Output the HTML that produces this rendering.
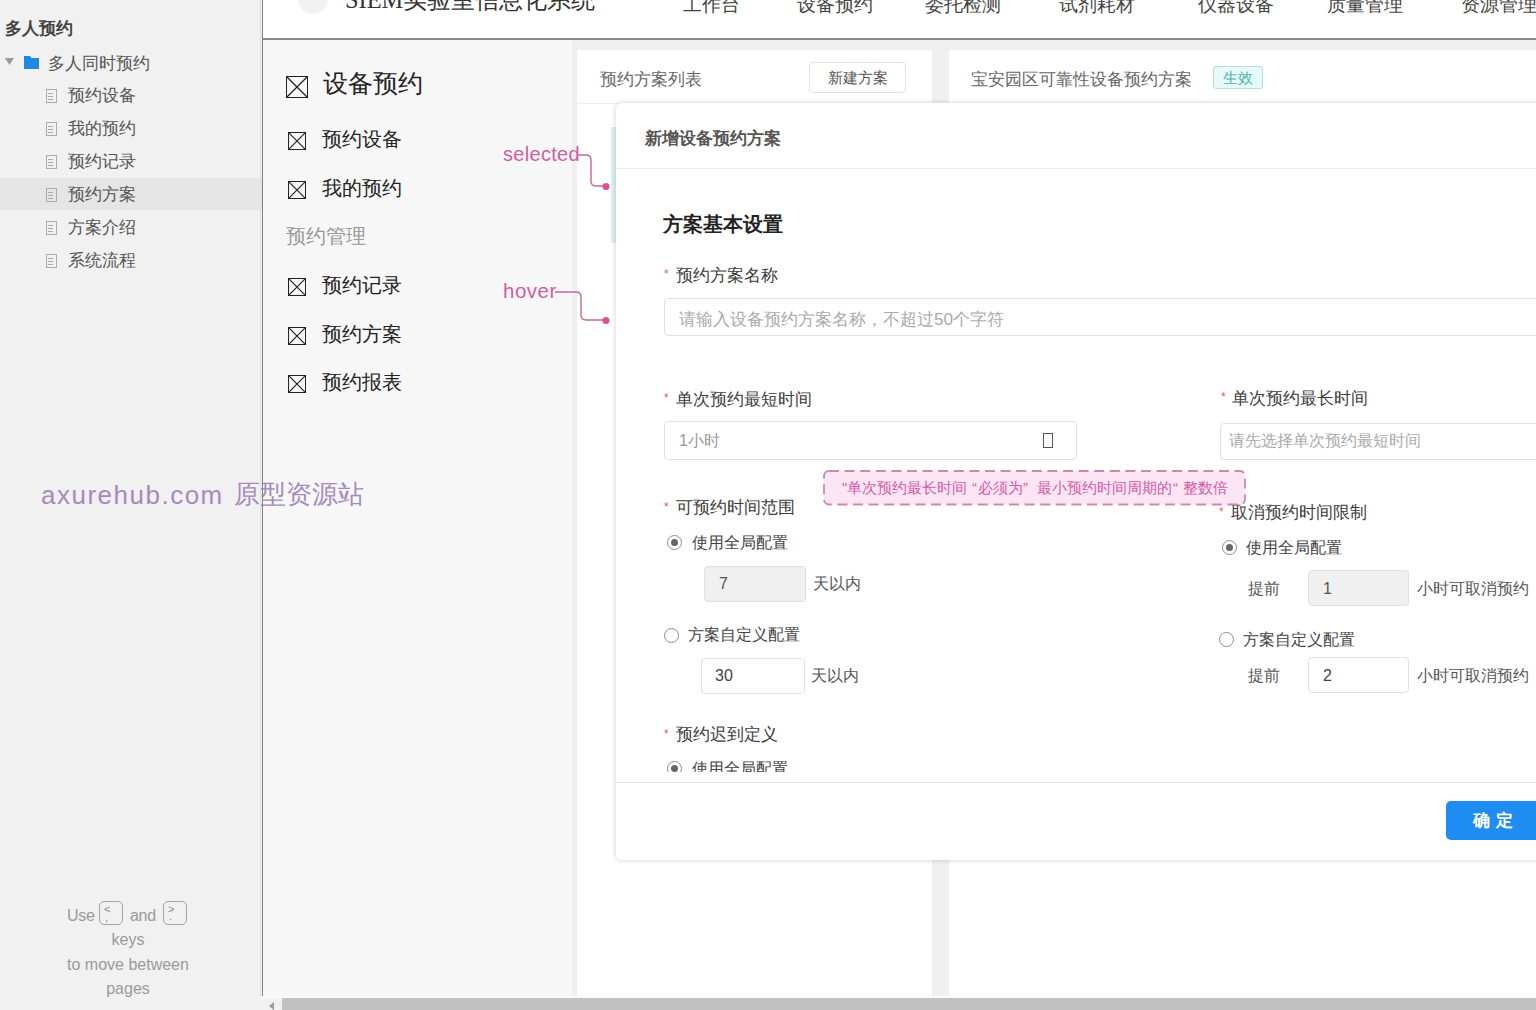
<!DOCTYPE html>
<html><head><meta charset="utf-8">
<style>
*{margin:0;padding:0;box-sizing:border-box}
html,body{width:1536px;height:1010px;overflow:hidden;background:#fff;font-family:"Liberation Sans",sans-serif;color:#333}
.a{position:absolute;white-space:nowrap}
#side{position:absolute;left:0;top:0;width:262px;height:1010px;background:#f1f1f1}
#sideline{position:absolute;left:262px;top:0;width:1px;height:996px;background:#808080}
.tr{font-size:17.3px;line-height:20px;color:#555}
.pg{position:absolute;width:11px;height:14px;border:1.7px solid #ababab;background:transparent}
.pg i{position:absolute;left:1.2px;width:5.2px;height:1.4px;background:#ababab}
.xi{position:absolute;border:1.6px solid #222}
.xi svg{position:absolute;left:0;top:0;width:100%;height:100%}
.lp{font-size:20px;line-height:24px;color:#222}
.nav{font-size:18.6px;line-height:22px;color:#444}
.key{position:absolute;width:24px;height:24px;border:1.6px solid #a4a4a4;border-radius:5px}
.key span{position:absolute;font-size:11px;line-height:12px;color:#888}
.pk{top:478.5px;font-size:15px;line-height:18px;color:#d55aa8}
.pink{color:#cf5ea0}
.lbl{font-size:17px;line-height:20px;color:#3c3c3c}
.ast{color:#e06060;font-size:12px;line-height:12px}
.inp{position:absolute;border:1px solid #e0e0e0;border-radius:4px;background:#fff}
.ph{font-size:16px;line-height:20px;color:#aaa}
.radio{position:absolute;width:15px;height:15px;border:1px solid #8c8c8c;border-radius:50%;background:#fff}
.radio.on::after{content:"";position:absolute;left:3px;top:3px;width:7px;height:7px;border-radius:50%;background:#666}
</style></head><body>

<!-- SIDEBAR -->
<div id="side"></div>
<div class="a" style="left:5px;top:18px;font-size:17.3px;line-height:20px;font-weight:bold;color:#444">多人预约</div>
<svg class="a" style="left:5px;top:58px" width="10" height="8"><path d="M0 0H9L4.5 7Z" fill="#9a9a9a"/></svg>
<svg class="a" style="left:24px;top:56px" width="15" height="13"><path d="M0 0H6L7.5 2H15V13H0Z" fill="#1e88e5"/></svg>
<div class="a tr" style="left:48px;top:53px">多人同时预约</div>

<div class="a" style="left:0;top:178px;width:262px;height:32px;background:#e5e5e5"></div>
<div class="pg" style="left:46px;top:89px"><i style="top:3px"></i><i style="top:6px"></i><i style="top:9px"></i></div>
<div class="a tr" style="left:68px;top:85px">预约设备</div>
<div class="pg" style="left:46px;top:122px"><i style="top:3px"></i><i style="top:6px"></i><i style="top:9px"></i></div>
<div class="a tr" style="left:68px;top:118px">我的预约</div>
<div class="pg" style="left:46px;top:155px"><i style="top:3px"></i><i style="top:6px"></i><i style="top:9px"></i></div>
<div class="a tr" style="left:68px;top:151px">预约记录</div>
<div class="pg" style="left:46px;top:188px"><i style="top:3px"></i><i style="top:6px"></i><i style="top:9px"></i></div>
<div class="a tr" style="left:68px;top:184px">预约方案</div>
<div class="pg" style="left:46px;top:221px"><i style="top:3px"></i><i style="top:6px"></i><i style="top:9px"></i></div>
<div class="a tr" style="left:68px;top:217px">方案介绍</div>
<div class="pg" style="left:46px;top:254px"><i style="top:3px"></i><i style="top:6px"></i><i style="top:9px"></i></div>
<div class="a tr" style="left:68px;top:250px">系统流程</div>

<!-- footer hint -->
<div class="a" style="left:67px;top:904px;font-size:16px;line-height:24px;color:#9a9a9a;letter-spacing:-0.3px">Use</div>
<div class="key" style="left:99px;top:901px"><span style="left:4px;top:1px">&lt;</span><span style="left:5px;top:9px">,</span></div>
<div class="a" style="left:130px;top:904px;font-size:16px;line-height:24px;color:#9a9a9a;letter-spacing:-0.3px">and</div>
<div class="key" style="left:163px;top:901px"><span style="left:4px;top:1px">&gt;</span><span style="left:5px;top:8px">.</span></div>
<div class="a" style="left:0;top:928px;width:256px;text-align:center;font-size:16px;line-height:24.5px;color:#9a9a9a">keys<br>to move between<br>pages</div>



<!-- HEADER -->
<div class="a" style="left:263px;top:0;width:1273px;height:38px;background:#fff"></div>


<!-- left panel -->
<div class="a" style="left:263px;top:39px;width:309px;height:958px;background:#f7f7f7"></div>
<div class="a" style="left:572px;top:39px;width:5px;height:958px;background:#efefef"></div>
<div class="a" style="left:577px;top:39px;width:959px;height:11px;background:#f0f0f0"></div>
<div class="a" style="left:932px;top:39px;width:17px;height:958px;background:#f0f0f0"></div>

<!-- cards -->
<div class="a" style="left:577px;top:50px;width:355px;height:54px;background:#fff;border-bottom:1px solid #eee"></div>
<div class="a" style="left:949px;top:50px;width:587px;height:54px;background:#fff;border-bottom:1px solid #eee"></div>


<!-- header content -->
<div class="a" style="left:298px;top:-16px;width:30px;height:30px;border-radius:50%;background:#f2f2f2"></div>
<div class="a" style="left:345px;top:-13px;font-family:'Liberation Serif',serif;font-size:24.4px;line-height:26px;color:#333">SIEM实验室信息化系统</div>
<div class="a nav" style="left:683px;top:-6.5px">工作台</div>
<div class="a nav" style="left:797px;top:-6.5px">设备预约</div>
<div class="a nav" style="left:925px;top:-6.5px">委托检测</div>
<div class="a nav" style="left:1059px;top:-6.5px">试剂耗材</div>
<div class="a nav" style="left:1198px;top:-6.5px">仪器设备</div>
<div class="a nav" style="left:1327px;top:-6.5px">质量管理</div>
<div class="a nav" style="left:1461px;top:-6.5px">资源管理</div>

<!-- left panel content -->
<div class="xi" style="left:286px;top:76px;width:22px;height:22px"><svg viewBox="0 0 22 22" preserveAspectRatio="none"><path d="M0 0L22 22M22 0L0 22" stroke="#222" stroke-width="1.4"/></svg></div>
<div class="a" style="left:323px;top:70px;font-size:24.6px;line-height:28px;color:#222">设备预约</div>
<div class="xi" style="left:288px;top:132px;width:18px;height:18px"><svg viewBox="0 0 18 18" preserveAspectRatio="none"><path d="M0 0L18 18M18 0L0 18" stroke="#222" stroke-width="1.3"/></svg></div>
<div class="a lp" style="left:322px;top:127px">预约设备</div>
<div class="xi" style="left:288px;top:181px;width:18px;height:18px"><svg viewBox="0 0 18 18" preserveAspectRatio="none"><path d="M0 0L18 18M18 0L0 18" stroke="#222" stroke-width="1.3"/></svg></div>
<div class="a lp" style="left:322px;top:176px">我的预约</div>
<div class="a lp" style="left:286px;top:224px;color:#999">预约管理</div>
<div class="xi" style="left:288px;top:278px;width:18px;height:18px"><svg viewBox="0 0 18 18" preserveAspectRatio="none"><path d="M0 0L18 18M18 0L0 18" stroke="#222" stroke-width="1.3"/></svg></div>
<div class="a lp" style="left:322px;top:273px">预约记录</div>
<div class="xi" style="left:288px;top:327px;width:18px;height:18px"><svg viewBox="0 0 18 18" preserveAspectRatio="none"><path d="M0 0L18 18M18 0L0 18" stroke="#222" stroke-width="1.3"/></svg></div>
<div class="a lp" style="left:322px;top:322px">预约方案</div>
<div class="xi" style="left:288px;top:375px;width:18px;height:18px"><svg viewBox="0 0 18 18" preserveAspectRatio="none"><path d="M0 0L18 18M18 0L0 18" stroke="#222" stroke-width="1.3"/></svg></div>
<div class="a lp" style="left:322px;top:370px">预约报表</div>

<!-- annotations -->
<div class="a pink" style="left:503px;top:142px;font-size:20px;line-height:24px;letter-spacing:0.3px">selected</div>
<div class="a pink" style="left:503px;top:279px;font-size:20.5px;line-height:24px;letter-spacing:0.5px">hover</div>
<svg class="a" style="left:0;top:0" width="620" height="400"><g fill="none" stroke="#c4689c" stroke-width="1.4"><path d="M578 155H586Q591 155 591 160V181Q591 186 596 186H606"/><path d="M555 292H576Q581 292 581 297V315Q581 320 586 320H606"/></g><circle cx="606" cy="186.5" r="3.5" fill="#dc4f95"/><circle cx="606" cy="320.5" r="3.5" fill="#dc4f95"/></svg>

<!-- card texts -->
<div class="a" style="left:600px;top:69px;font-size:17.3px;line-height:20px;color:#666">预约方案列表</div>
<div class="a" style="left:809px;top:62px;width:97px;height:31px;border:1px solid #e3e3e3;border-radius:4px;background:#fff;font-size:15px;line-height:29px;text-align:center;color:#555">新建方案</div>
<div class="a" style="left:971px;top:69px;font-size:17.3px;line-height:20px;color:#666">宝安园区可靠性设备预约方案</div>
<div class="a" style="left:1213px;top:66px;width:50px;height:23px;border:1px solid #b4dedc;border-radius:3px;background:#e6fafa;font-size:15px;line-height:21px;text-align:center;color:#4db3aa">生效</div>

<div class="a" style="left:611px;top:127px;width:5px;height:116px;background:#ddeef4"></div>


<!-- MODAL -->
<div class="a" style="left:616px;top:103px;width:960px;height:757px;background:#fff;border-radius:5px;box-shadow:0 0 5px rgba(0,0,0,.2)"></div>
<div class="a" style="left:645px;top:128.5px;font-size:17px;line-height:20px;font-weight:bold;color:#555">新增设备预约方案</div>
<div class="a" style="left:616px;top:168px;width:920px;height:1px;background:#ececec"></div>
<div class="a" style="left:616px;top:782px;width:920px;height:1px;background:#e6e6e6"></div>
<div class="a" style="left:1446px;top:801px;width:100px;height:39px;border-radius:5px;background:#1e8cf0;color:#fff;font-size:17px;line-height:39px;font-weight:bold;padding-left:27px;letter-spacing:6px">确定</div>

<div class="a" style="left:616px;top:169px;width:920px;height:603px;overflow:hidden">
 <div style="position:absolute;left:-616px;top:-169px;width:1536px;height:1010px">
  <div class="a" style="left:663px;top:212px;font-size:19.5px;line-height:24px;font-weight:bold;color:#222">方案基本设置</div>

  <div class="a ast" style="left:664px;top:268px">*</div>
  <div class="a lbl" style="left:676px;top:266px">预约方案名称</div>
  <div class="inp" style="left:664px;top:298px;width:900px;height:38px"></div>
  <div class="a ph" style="left:679px;top:309px;font-size:17.2px">请输入设备预约方案名称，不超过50个字符</div>

  <div class="a ast" style="left:664px;top:392px">*</div>
  <div class="a lbl" style="left:676px;top:390px">单次预约最短时间</div>
  <div class="inp" style="left:664px;top:421px;width:413px;height:39px"></div>
  <div class="a ph" style="left:679px;top:431px;color:#999">1小时</div>
  <div class="a" style="left:1043px;top:433px;width:10px;height:15px;border:1.6px solid #555"></div>

  <div class="a ast" style="left:1221px;top:391px">*</div>
  <div class="a lbl" style="left:1232px;top:389px">单次预约最长时间</div>
  <div class="inp" style="left:1220px;top:423px;width:400px;height:37px"></div>
  <div class="a ph" style="left:1229px;top:431px;font-size:16px">请先选择单次预约最短时间</div>

  <div class="a ast" style="left:664px;top:501px">*</div>
  <div class="a lbl" style="left:676px;top:498px">可预约时间范围</div>
  <div class="radio on" style="left:667px;top:535px"></div>
  <div class="a" style="left:692px;top:533px;font-size:16px;line-height:20px;color:#444">使用全局配置</div>
  <div class="inp" style="left:704px;top:566px;width:102px;height:36px;background:#f0f0f0"></div>
  <div class="a" style="left:719px;top:574px;font-size:16px;line-height:20px;color:#555">7</div>
  <div class="a" style="left:813px;top:574px;font-size:16px;line-height:20px;color:#555">天以内</div>

  <div class="radio" style="left:664px;top:628px"></div>
  <div class="a" style="left:688px;top:625px;font-size:16px;line-height:20px;color:#444">方案自定义配置</div>
  <div class="inp" style="left:701px;top:658px;width:104px;height:36px"></div>
  <div class="a" style="left:715px;top:666px;font-size:16px;line-height:20px;color:#444">30</div>
  <div class="a" style="left:811px;top:666px;font-size:16px;line-height:20px;color:#555">天以内</div>

  <div class="a ast" style="left:1219px;top:506px">*</div>
  <div class="a lbl" style="left:1231px;top:503px">取消预约时间限制</div>
  <div class="radio on" style="left:1222px;top:540px"></div>
  <div class="a" style="left:1246px;top:538px;font-size:16px;line-height:20px;color:#444">使用全局配置</div>
  <div class="a" style="left:1248px;top:579px;font-size:16px;line-height:20px;color:#555">提前</div>
  <div class="inp" style="left:1308px;top:570px;width:101px;height:36px;background:#f0f0f0"></div>
  <div class="a" style="left:1323px;top:579px;font-size:16px;line-height:20px;color:#555">1</div>
  <div class="a" style="left:1417px;top:579px;font-size:16px;line-height:20px;color:#555">小时可取消预约</div>

  <div class="radio" style="left:1219px;top:632px"></div>
  <div class="a" style="left:1243px;top:630px;font-size:16px;line-height:20px;color:#444">方案自定义配置</div>
  <div class="a" style="left:1248px;top:666px;font-size:16px;line-height:20px;color:#555">提前</div>
  <div class="inp" style="left:1308px;top:657px;width:101px;height:36px"></div>
  <div class="a" style="left:1323px;top:666px;font-size:16px;line-height:20px;color:#444">2</div>
  <div class="a" style="left:1417px;top:666px;font-size:16px;line-height:20px;color:#555">小时可取消预约</div>

  <div class="a ast" style="left:664px;top:728px">*</div>
  <div class="a lbl" style="left:676px;top:725px">预约迟到定义</div>
  <div class="radio on" style="left:667px;top:761px"></div>
  <div class="a" style="left:692px;top:759px;font-size:16px;line-height:20px;color:#444">使用全局配置</div>

  <svg class="a" style="left:823px;top:470px" width="423" height="36"><rect x="1" y="1" width="421" height="33.5" rx="5" fill="#fce6f3" stroke="#cc88b4" stroke-width="1.8" stroke-dasharray="10 5.6"/></svg>
  <div class="a pk" style="left:842px">"</div><div class="a pk" style="left:846.5px">单次预约最长时间</div>
  <div class="a pk" style="left:972px">“</div><div class="a pk" style="left:977.5px">必须为</div><div class="a pk" style="left:1023px">”</div>
  <div class="a pk" style="left:1037px">最小预约时间周期的</div>
  <div class="a pk" style="left:1173px">“</div><div class="a pk" style="left:1182.5px">整数倍</div>
 </div>
</div>

<div class="a" style="left:263px;top:38px;width:1273px;height:2px;background:#8a8a8a"></div>
<!-- scrollbar -->
<div class="a" style="left:261px;top:996px;width:1275px;height:2px;background:#fafafa"></div>
<div class="a" style="left:261px;top:998px;width:1275px;height:12px;background:#c1c1c1"></div>
<div class="a" style="left:261px;top:998px;width:21px;height:12px;background:#f1f1f1"></div>
<svg class="a" style="left:269px;top:1002px" width="6" height="8"><path d="M5 0V8L0 4Z" fill="#999"/></svg>

<div class="a" style="left:41px;top:478px;font-size:26px;line-height:34px;color:#a48bbd;letter-spacing:1.5px">axurehub.com</div>
<div class="a" style="left:234px;top:477px;font-size:26.4px;line-height:34px;color:#a48bbd">原型资源站</div>
<div class="a" style="left:260px;top:0;width:1px;height:996px;background:#e0e0e0"></div>
<div id="sideline"></div>
</body></html>
